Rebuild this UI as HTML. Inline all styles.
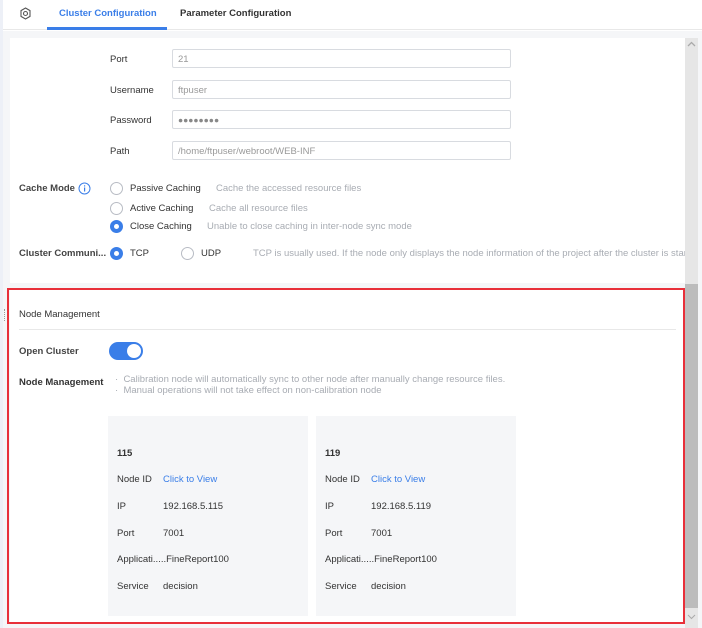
<!DOCTYPE html>
<html><head><meta charset="utf-8"><style>
*{box-sizing:border-box;margin:0;padding:0}
body{width:702px;height:628px;overflow:hidden;background:#fff;font-family:"Liberation Sans",sans-serif;font-size:9.5px;color:#333;position:relative}
.a{position:absolute;white-space:nowrap}
.lbl{color:#333;font-size:9.5px}
.inp{position:absolute;left:172px;width:339px;height:19px;border:1px solid #d8dbe0;border-radius:2px;color:#999;font-size:9.5px;padding:4px 5px;background:#fff}
.gray{color:#a8acb3;font-size:9.5px}
.radio{position:absolute;width:13px;height:13px;border:1px solid #b8bcc4;border-radius:50%;background:#fff}
.radio.on{background:#3a7ee8;border-color:#3a7ee8}
.radio.on::after{content:"";position:absolute;left:3px;top:3px;width:5px;height:5px;border-radius:50%;background:#fff}
.card{position:absolute;top:416px;width:200px;height:200px;background:#f5f6f8}
.card div{position:absolute;left:9px;font-size:9.5px;color:#333;white-space:nowrap}
.card span{position:absolute;left:46px}
</style></head><body>
<div class="a" style="left:0;top:0;width:3px;height:628px;background:#edf0f7"></div>
<div class="a" style="left:3px;top:0;width:699px;height:30px;background:#fff;border-bottom:1px solid #e8e8e8"></div>
<svg class="a" style="left:19px;top:7px" width="13" height="13" viewBox="0 0 13 13"><path d="M6.5 1 L11 3.6 L11 9.4 L6.5 12 L2 9.4 L2 3.6 Z" fill="none" stroke="#555" stroke-width="1.1"/><circle cx="6.5" cy="6.5" r="2" fill="none" stroke="#555" stroke-width="1.1"/></svg>
<div class="a" style="left:59px;top:8px;font-size:9.5px;font-weight:bold;color:#3a7ee8">Cluster Configuration</div>
<div class="a" style="left:47px;top:27px;width:120px;height:3px;background:#3a7ee8"></div>
<div class="a" style="left:180px;top:8px;font-size:9.5px;font-weight:bold;color:#333">Parameter Configuration</div>
<div class="a" style="left:3px;top:31px;width:699px;height:597px;background:#f5f6f8"></div>
<div class="a" style="left:10px;top:38px;width:675px;height:245px;background:#fff"></div>
<div class="a" style="left:685px;top:38px;width:13px;height:590px;background:#e6e6e6"></div>
<div class="a" style="left:685px;top:284px;width:13px;height:324px;background:#bcbcbc"></div>
<svg class="a" style="left:686px;top:40px" width="11" height="8"><path d="M2 6 L5.5 2.5 L9 6" fill="none" stroke="#aaa" stroke-width="1.3"/></svg>
<svg class="a" style="left:686px;top:613px" width="11" height="8"><path d="M2 2 L5.5 5.5 L9 2" fill="none" stroke="#aaa" stroke-width="1"/></svg>
<div class="a lbl" style="left:110px;top:54px">Port</div><div class="inp" style="top:49px">21</div>
<div class="a lbl" style="left:110px;top:85px">Username</div><div class="inp" style="top:80px">ftpuser</div>
<div class="a lbl" style="left:110px;top:115px">Password</div><div class="inp" style="top:110px;font-size:8.5px;color:#888">●●●●●●●●</div>
<div class="a lbl" style="left:110px;top:146px">Path</div><div class="inp" style="top:141px">/home/ftpuser/webroot/WEB-INF</div>

<div class="a lbl" style="left:19px;top:183px;font-weight:bold;color:#444">Cache Mode</div>
<svg class="a" style="left:78px;top:182px" width="13" height="13"><circle cx="6.5" cy="6.5" r="5.5" fill="none" stroke="#3a7ee8" stroke-width="1"/><rect x="6" y="5.5" width="1.2" height="4" fill="#3a7ee8"/><rect x="6" y="3.3" width="1.2" height="1.2" fill="#3a7ee8"/></svg>
<div class="radio" style="left:110px;top:182px"></div><div class="a lbl" style="left:130px;top:183px">Passive Caching</div><div class="a gray" style="left:216px;top:183px">Cache the accessed resource files</div>
<div class="radio" style="left:110px;top:202px"></div><div class="a lbl" style="left:130px;top:203px">Active Caching</div><div class="a gray" style="left:209px;top:203px">Cache all resource files</div>
<div class="radio on" style="left:110px;top:220px"></div><div class="a lbl" style="left:130px;top:221px">Close Caching</div><div class="a gray" style="left:207px;top:221px">Unable to close caching in inter-node sync mode</div>
<div class="a lbl" style="left:19px;top:248px;font-weight:bold;color:#444">Cluster Communi...</div>
<div class="radio on" style="left:110px;top:247px"></div><div class="a lbl" style="left:130px;top:248px">TCP</div>
<div class="radio" style="left:181px;top:247px"></div><div class="a lbl" style="left:201px;top:248px">UDP</div>
<div class="a gray" style="left:253px;top:248px;width:432px;overflow:hidden">TCP is usually used. If the node only displays the node information of the project after the cluster is started</div>

<div class="a" style="left:10px;top:290px;width:673px;height:332px;background:#fff"></div>
<div class="a" style="left:7px;top:288px;width:678px;height:336px;border:2px solid #e8303a"></div>
<div class="a" style="left:4px;top:309px;width:1px;height:12px;border-left:1px dotted #999"></div>
<div class="a lbl" style="left:19px;top:309px">Node Management</div>
<div class="a" style="left:19px;top:329px;width:657px;height:1px;background:#e8e8e8"></div>
<div class="a lbl" style="left:19px;top:346px;font-weight:bold;color:#444">Open Cluster</div>
<div class="a" style="left:109px;top:342px;width:34px;height:18px;border-radius:9px;background:#3a7ee8"></div>
<div class="a" style="left:127px;top:344px;width:14px;height:14px;border-radius:50%;background:#fff"></div>
<div class="a lbl" style="left:19px;top:377px;font-weight:bold">Node Management</div>
<div class="a gray" style="left:115px;top:374px">·&nbsp; Calibration node will automatically sync to other node after manually change resource files.</div>
<div class="a gray" style="left:115px;top:385px">·&nbsp; Manual operations will not take effect on non-calibration node</div>

<div class="card" style="left:108px">
 <div style="top:32px;font-weight:bold">115</div>
 <div style="top:58px">Node ID<span style="color:#3a7ee8">Click to View</span></div>
 <div style="top:85px">IP<span>192.168.5.115</span></div>
 <div style="top:112px">Port<span>7001</span></div>
 <div style="top:138px">Applicati.....FineReport100</div>
 <div style="top:165px">Service<span>decision</span></div>
</div>
<div class="card" style="left:316px">
 <div style="top:32px;font-weight:bold">119</div>
 <div style="top:58px">Node ID<span style="color:#3a7ee8">Click to View</span></div>
 <div style="top:85px">IP<span>192.168.5.119</span></div>
 <div style="top:112px">Port<span>7001</span></div>
 <div style="top:138px">Applicati.....FineReport100</div>
 <div style="top:165px">Service<span>decision</span></div>
</div>
</body></html>
